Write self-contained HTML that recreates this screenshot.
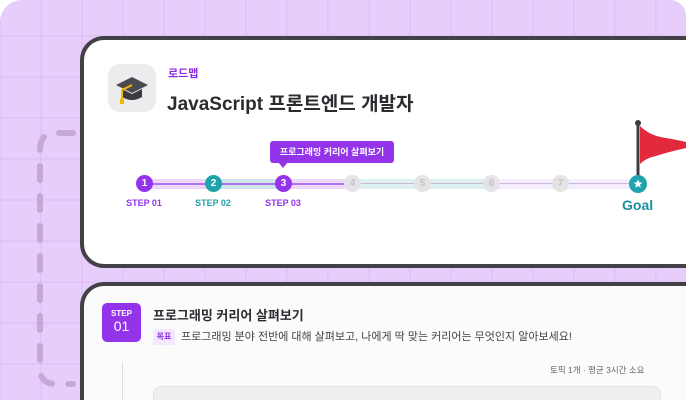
<!DOCTYPE html>
<html><head><meta charset="utf-8"><style>
*{margin:0;padding:0;box-sizing:border-box}
html,body{width:686px;height:400px;overflow:hidden;background:#fff}
body{font-family:"Liberation Sans","Noto Sans CJK KR",sans-serif}
#w{position:relative;width:686px;height:400px;overflow:hidden}
.bg{position:absolute;left:0;top:0;width:686px;height:400px;border-radius:22px 16px 0 0;background:
linear-gradient(90deg,rgba(160,110,200,.09) 2px,transparent 2px) -1px 0/41px 41px,
linear-gradient(0deg,rgba(160,110,200,.09) 2px,transparent 2px) 0 -4px/41px 41px,#e6cdfb}
.card{position:absolute;left:80px;width:606px;border:4px solid #434047;border-right:none;background:#fff}
.c1{top:36px;height:232px;border-radius:24px 0 0 24px}
.c2{top:282px;height:118px;background:#fbfbfc;border-bottom:none;border-radius:24px 0 0 0}
.abs{position:absolute}
.node{position:absolute;width:17px;height:17px;border-radius:50%;top:175px;color:#fff;font-size:10px;font-weight:bold;text-align:center;line-height:17px}
.lbl{position:absolute;top:198px;font-size:9px;font-weight:bold;width:50px;text-align:center}
</style></head><body><div id="w">
<div class="bg"></div>
<svg class="abs" style="left:0;top:0" width="90" height="400"><path d="M73 133 H55 Q40 133 40 150 V368 Q40 384 56 384 H73" fill="none" stroke="#c6a7d8" stroke-width="6" stroke-linecap="round" stroke-dasharray="14 16"/></svg>
<div class="card c1"></div>
<div class="card c2"></div>
<div class="abs" style="left:108px;top:64px;width:48px;height:48px;border-radius:12px;background:#ececee"></div>
<svg class="abs" style="left:112px;top:70px" width="40" height="36"><path d="M4 15 L20 7 L36 15 L20 23Z" fill="#4a4a4f"/><path d="M10 19 V27 Q20 33 30 27 V19 L20 24Z" fill="#3a3a3f"/><path d="M20 15 L10 20 V30" stroke="#f5b800" stroke-width="2" fill="none"/><rect x="8" y="29" width="4" height="5" fill="#f5b800"/></svg>
<div class="abs" style="left:168px;top:65px;font-size:11px;font-weight:bold;color:#8a2be2">로드맵</div>
<div class="abs" style="left:167px;top:89px;font-size:19px;font-weight:bold;color:#2d2b30">JavaScript 프론트엔드 개발자</div>
<div class="abs" style="left:270px;top:141px;width:124px;height:22px;background:#9333ea;border-radius:3px;color:#fff;font-size:9px;font-weight:bold;text-align:center;line-height:22px">프로그래밍 커리어 살펴보기</div>
<div class="abs" style="left:278px;top:162px;width:0;height:0;border-left:5px solid transparent;border-right:5px solid transparent;border-top:6px solid #9333ea"></div>
<div class="abs" style="left:144px;top:179px;width:70px;height:10px;background:#ecd8fb"></div>
<div class="abs" style="left:213px;top:179px;width:70px;height:10px;background:#cfe7ea"></div>
<div class="abs" style="left:283px;top:179px;width:70px;height:10px;background:#ecd8fb"></div>
<div class="abs" style="left:352px;top:179px;width:140px;height:10px;background:#dff0f1"></div>
<div class="abs" style="left:491px;top:179px;width:147px;height:10px;background:#f5ecfd"></div>
<div class="abs" style="left:144px;top:183px;width:494px;height:1px;background:#c9b8d9"></div>
<div class="abs" style="left:144px;top:183px;width:210px;height:1.5px;background:#b070f0"></div>
<div class="node" style="left:136px;background:#9333ea">1</div>
<div class="node" style="left:205px;background:#1fa3ad">2</div>
<div class="node" style="left:275px;background:#9333ea">3</div>
<div class="node" style="left:344px;background:#e4e4e7;color:#c4c4c8">4</div>
<div class="node" style="left:414px;background:#e4e4e7;color:#c4c4c8">5</div>
<div class="node" style="left:483px;background:#e4e4e7;color:#c4c4c8">6</div>
<div class="node" style="left:552px;background:#e4e4e7;color:#c4c4c8">7</div>
<div class="lbl" style="left:119px;color:#9333ea">STEP 01</div>
<div class="lbl" style="left:188px;color:#1fa3ad">STEP 02</div>
<div class="lbl" style="left:258px;color:#9333ea">STEP 03</div>
<svg class="abs" style="left:628px;top:118px" width="58" height="78"><path d="M10 4 V62" stroke="#3e3c42" stroke-width="3"/><circle cx="10" cy="5" r="3" fill="#3e3c42"/><path d="M12 8 Q22 18 38 20 Q50 22 58 24 V30 Q40 34 28 38 Q18 40 12 46Z" fill="#e3293c"/><circle cx="10" cy="66" r="9" fill="#1fa3ad"/><path d="M10 61.5 L11.3 64.4 L14.4 64.6 L12 66.6 L12.8 69.7 L10 68 L7.2 69.7 L8 66.6 L5.6 64.6 L8.7 64.4Z" fill="#fff"/></svg>
<div class="abs" style="left:622px;top:197px;font-size:14px;font-weight:bold;color:#1a8f9e">Goal</div>
<div class="abs" style="left:102px;top:303px;width:39px;height:39px;border-radius:5px;background:#9333ea;color:#fff;text-align:center"><div style="font-size:8px;font-weight:bold;margin-top:6px">STEP</div><div style="font-size:14px;line-height:16px">01</div></div>
<div class="abs" style="left:153px;top:305px;font-size:13px;font-weight:bold;color:#2d2b30">프로그래밍 커리어 살펴보기</div>
<div class="abs" style="left:153px;top:329px;width:22px;height:16px;background:#f3e8fd;color:#9333ea;font-size:8px;font-weight:bold;text-align:center;line-height:16px;border-radius:2px">목표</div>
<div class="abs" style="left:181px;top:328px;font-size:11px;color:#444">프로그래밍 분야 전반에 대해 살펴보고, 나에게 딱 맞는 커리어는 무엇인지 알아보세요!</div>
<div class="abs" style="left:122px;top:362px;width:1px;height:38px;background:#ddd"></div>
<div class="abs" style="left:550px;top:364px;font-size:8.5px;color:#666">토픽 1개 · 평균 3시간 소요</div>
<div class="abs" style="left:153px;top:386px;width:508px;height:14px;background:#efeff1;border-radius:8px 8px 0 0;border:1px solid #e4e4e7;border-bottom:none"></div>
</div></body></html>
